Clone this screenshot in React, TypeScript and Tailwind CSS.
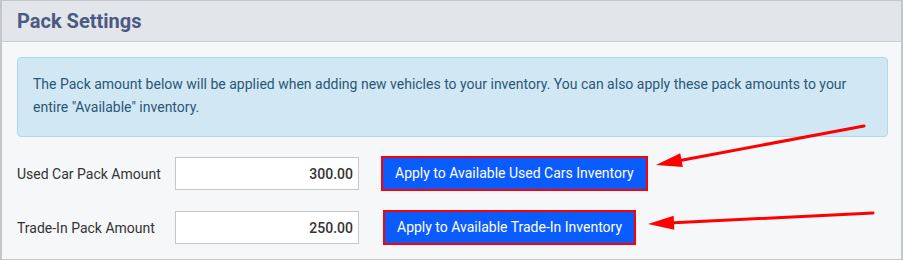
import React from 'react';

const font = { fontFamily: 'Roboto, "Liberation Sans", sans-serif' };

function Arrow({ x1, y1, x2, y2 }: { x1: number; y1: number; x2: number; y2: number }) {
  // simple annotation arrow, head at (x2, y2)
  const ang = Math.atan2(y2 - y1, x2 - x1);
  const len = 26;
  const w = 7;
  const bx = x2 - Math.cos(ang) * len;
  const by = y2 - Math.sin(ang) * len;
  const px = -Math.sin(ang) * w;
  const py = Math.cos(ang) * w;
  return (
    <g>
      <line x1={x1} y1={y1} x2={bx} y2={by} stroke="#ff0000" strokeWidth={3} strokeLinecap="round" />
      <polygon points={`${x2},${y2} ${bx + px},${by + py} ${bx - px},${by - py}`} fill="#ff0000" />
    </g>
  );
}

function Row({ label, value, button, gap }: { label: string; value: string; button: string; gap: string }) {
  return (
    <div className="flex items-center h-[35px]">
      <div className="w-[158px] text-[14px] text-[#333] pt-[2px]">{label}</div>
      <input
        readOnly
        value={value}
        className="w-[184px] h-[33px] border border-[#c6c6c6] bg-white text-right pr-[5px] text-[14px] font-medium text-[#333] outline-none"
        style={font}
      />
      <button className={`${gap} h-[35px] px-[12px] bg-[#0b5cff] border-2 border-[#ff0000] text-white text-[14px]`} style={font}>
        {button}
      </button>
    </div>
  );
}

export default function App() {
  return (
    <div className="relative w-[903px] h-[260px] overflow-hidden bg-white" style={font}>
      <div className="h-[260px] border-x-2 border-y border-[#c3c6cb] bg-[#f6f7f9] flex flex-col">
        <div className="h-[41px] shrink-0 bg-[#e2e5ea] border-b border-[#c9ccd1] flex items-center pl-[15px]">
          <h2 className="text-[20px] font-bold text-[#4b5a82]">Pack Settings</h2>
        </div>
        <div className="pl-[15px] pr-[13px] pt-[15px]">
          <div className="h-[80px] rounded-[4px] bg-[#d1e8f4] border border-[#aadcec] px-[15px] pt-[15px] text-[14px] leading-[23px] text-[#2a5778]">
            The Pack amount below will be applied when adding new vehicles to your inventory. You can also apply these pack amounts to your
            entire "Available" inventory.
          </div>
          <div className="mt-[19px] flex flex-col gap-[19px]">
            <Row label="Used Car Pack Amount" value="300.00" button="Apply to Available Used Cars Inventory" gap="ml-[22px]" />
            <Row label="Trade-In Pack Amount" value="250.00" button="Apply to Available Trade-In Inventory" gap="ml-[24px]" />
          </div>
        </div>
      </div>
      <svg className="absolute inset-0 pointer-events-none" width={903} height={260}>
        <Arrow x1={864} y1={126} x2={656} y2={165} />
        <Arrow x1={873} y1={213} x2={648} y2={224} />
      </svg>
    </div>
  );
}
